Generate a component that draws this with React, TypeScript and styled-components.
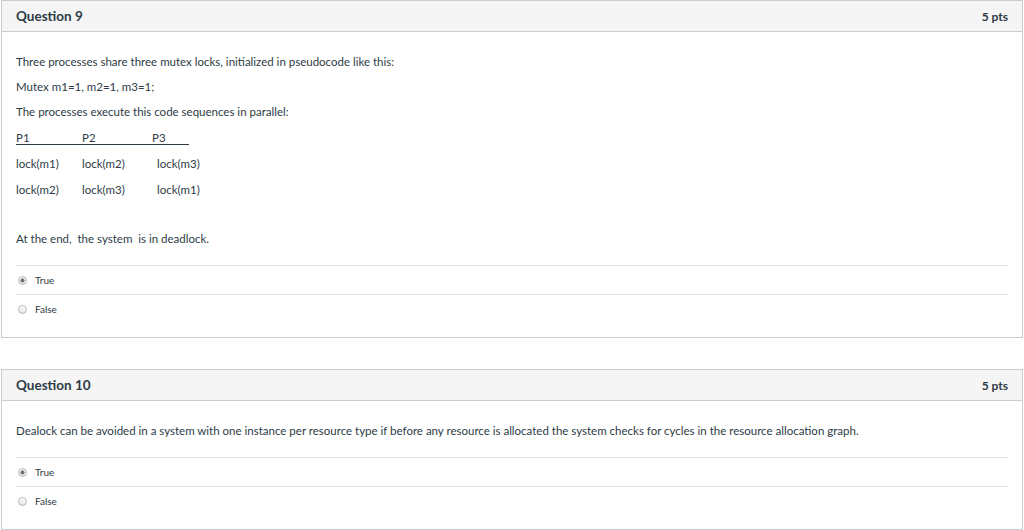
import React from "react";
import styled, { createGlobalStyle } from "styled-components";

const GlobalStyle = createGlobalStyle`
  html, body {
    margin: 0;
    padding: 0;
    background: #ffffff;
  }
  body {
    font-family: Lato, "Open Sans", "Liberation Sans", sans-serif;
    color: #2d3b45;
  }
`;

const Page = styled.div`
  width: 1024px;
  display: flex;
  flex-direction: column;
  gap: 31px;
  padding: 0 1px;
  box-sizing: border-box;
`;

const Card = styled.div`
  border: 1px solid #c7cdd1;
  background: #fff;
`;

const Header = styled.div`
  display: flex;
  justify-content: space-between;
  align-items: center;
  height: 30px;
  padding: 0 14px 0 14px;
  background: #f5f5f5;
  border-bottom: 1px solid #c7cdd1;
`;

const Title = styled.div`
  font-size: 13.5px;
  font-weight: 700;
  color: #2d3b45;
`;

const Points = styled.div`
  font-size: 12px;
  font-weight: 700;
  color: #2d3b45;
`;

const Body = styled.div`
  padding: 23px 14px 14px 14px;
`;

const Para = styled.p<{ $gap?: number; $top?: number }>`
  margin: ${({ $top }) => $top ?? 0}px 0 ${({ $gap }) => $gap ?? 11}px 0;
  font-size: 11.5px;
  line-height: 14px;
`;

const CodeHead = styled.div`
  display: flex;
  width: 173px;
  border-bottom: 1px solid #2d3b45;
  font-size: 11.5px;
  line-height: 12px;
  margin: 13px 0 12px;
`;

const Cell = styled.span<{ $w: number }>`
  width: ${({ $w }) => $w}px;
  flex: none;
`;

const CodeRow = styled.div`
  display: flex;
  font-size: 11.5px;
  line-height: 14px;
  margin-bottom: 12px;
`;

const Answers = styled.div`
  margin-top: 19px;
`;

const Answer = styled.div`
  display: flex;
  align-items: center;
  gap: 8px;
  height: 28px;
  padding-left: 2px;
  border-top: 1px solid #dfe2e4;
  font-size: 10px;
`;

const Radio = styled.span<{ $on?: boolean }>`
  width: 7px;
  height: 7px;
  border-radius: 50%;
  border: 1px solid #b4b8bb;
  background: ${({ $on }) =>
    $on ? "radial-gradient(circle, #6b7075 0 1.8px, #eceef0 2.3px)" : "linear-gradient(#fbfbfb, #e6e8ea)"};
`;

const AnswerList: React.FC<{ selected: string }> = ({ selected }) => (
  <Answers>
    {["True", "False"].map((label) => (
      <Answer key={label}>
        <Radio $on={label === selected} />
        {label}
      </Answer>
    ))}
  </Answers>
);

const App: React.FC = () => (
  <>
    <GlobalStyle />
    <Page>
      <Card>
        <Header>
          <Title>Question 9</Title>
          <Points>5 pts</Points>
        </Header>
        <Body>
          <Para>Three processes share three mutex locks, initialized in pseudocode like this:</Para>
          <Para>Mutex m1=1, m2=1, m3=1;</Para>
          <Para $gap={0}>The processes execute this code sequences in parallel:</Para>
          <CodeHead>
            <Cell $w={66}>P1</Cell>
            <Cell $w={70}>P2</Cell>
            <Cell $w={37}>P3</Cell>
          </CodeHead>
          <CodeRow>
            <Cell $w={66}>lock(m1)</Cell>
            <Cell $w={75}>lock(m2)</Cell>
            <Cell $w={60}>lock(m3)</Cell>
          </CodeRow>
          <CodeRow>
            <Cell $w={66}>lock(m2)</Cell>
            <Cell $w={75}>lock(m3)</Cell>
            <Cell $w={60}>lock(m1)</Cell>
          </CodeRow>
          <Para $gap={0} $top={35}>At the end,&nbsp; the system&nbsp; is in deadlock.</Para>
          <AnswerList selected="True" />
        </Body>
      </Card>
      <Card>
        <Header>
          <Title>Question 10</Title>
          <Points>5 pts</Points>
        </Header>
        <Body>
          <Para $gap={0}>
            Dealock can be avoided in a system with one instance per resource type if before any resource is
            allocated the system checks for cycles in the resource allocation graph.
          </Para>
          <AnswerList selected="True" />
        </Body>
      </Card>
    </Page>
  </>
);

export default App;
